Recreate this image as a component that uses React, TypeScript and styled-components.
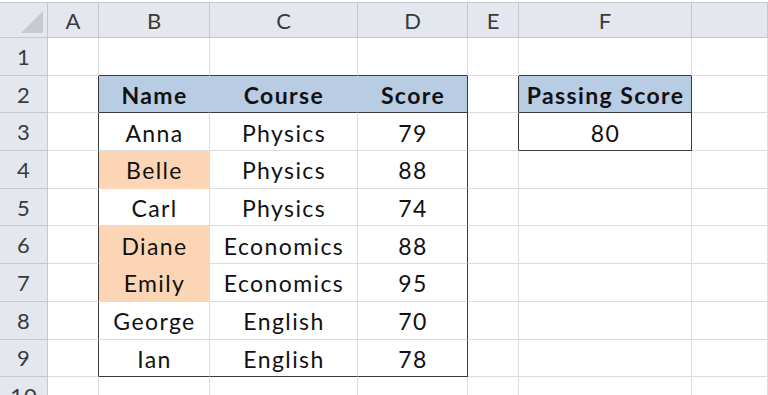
import React from "react";
import styled, { createGlobalStyle } from "styled-components";

const GRID = "#dadcdd";
const DARK = "#3a3a3a";
const HEAD_BG = "#e4e8ee";
const HEAD_LINE = "#c3c8ce";
const BLUE = "#b8cce4";
const PEACH = "#fcd5b4";

const COLS = ["A", "B", "C", "D", "E", "F", ""];
const WIDTHS = [48, 51, 111, 148, 110, 51, 173, 76];
const ROW_H = 37.7;

type Box = { r1: number; r2: number; c1: number; c2: number };

// outlined ranges, 1-based rows, 0-based columns (A = 0)
const BOXES: Box[] = [
  { r1: 2, r2: 9, c1: 1, c2: 3 },
  { r1: 2, r2: 3, c1: 5, c2: 5 }
];

type CellData = { text: string; bold?: boolean; fill?: string };

const DATA: Record<number, Record<number, CellData>> = {
  2: {
    1: { text: "Name", bold: true, fill: BLUE },
    2: { text: "Course", bold: true, fill: BLUE },
    3: { text: "Score", bold: true, fill: BLUE },
    5: { text: "Passing Score", bold: true, fill: BLUE }
  },
  3: { 1: { text: "Anna" }, 2: { text: "Physics" }, 3: { text: "79" }, 5: { text: "80" } },
  4: { 1: { text: "Belle", fill: PEACH }, 2: { text: "Physics" }, 3: { text: "88" } },
  5: { 1: { text: "Carl" }, 2: { text: "Physics" }, 3: { text: "74" } },
  6: { 1: { text: "Diane", fill: PEACH }, 2: { text: "Economics" }, 3: { text: "88" } },
  7: { 1: { text: "Emily", fill: PEACH }, 2: { text: "Economics" }, 3: { text: "95" } },
  8: { 1: { text: "George" }, 2: { text: "English" }, 3: { text: "70" } },
  9: { 1: { text: "Ian" }, 2: { text: "English" }, 3: { text: "78" } }
};

const inRange = (v: number, a: number, b: number) => v >= a && v <= b;

const rightEdge = (r: number, c: number) =>
  BOXES.some((b) => inRange(r, b.r1, b.r2) && (c === b.c2 || c + 1 === b.c1));

const bottomEdge = (r: number, c: number) =>
  BOXES.some(
    (b) =>
      inRange(c, b.c1, b.c2) && (r === b.r2 || r + 1 === b.r1 || r === b.r1)
  );

const GlobalStyle = createGlobalStyle`
  html, body {
    margin: 0;
    padding: 0;
    background: #ffffff;
    overflow: hidden;
  }
`;

const Sheet = styled.div`
  display: grid;
  grid-template-columns: ${WIDTHS.map((w) => `${w}px`).join(" ")};
  grid-auto-rows: ${ROW_H}px;
  grid-template-rows: 35px;
  margin-top: 2px;
  border-top: 1px solid ${HEAD_LINE};
  font-family: Lato, "Liberation Sans", sans-serif;
  width: 768px;
  height: 392px;
  overflow: hidden;
`;

const Corner = styled.div`
  background: ${HEAD_BG};
  border-right: 1px solid ${HEAD_LINE};
  border-bottom: 1px solid ${HEAD_LINE};
  position: relative;
  &::after {
    content: "";
    position: absolute;
    right: 4px;
    bottom: 4px;
    width: 0;
    height: 0;
    border-left: 22px solid transparent;
    border-bottom: 22px solid #c7cbd1;
  }
`;

const Heading = styled.div`
  background: ${HEAD_BG};
  border-right: 1px solid ${HEAD_LINE};
  border-bottom: 1px solid ${HEAD_LINE};
  display: flex;
  align-items: center;
  justify-content: center;
  padding-left: 1px;
  font-size: 22px;
  letter-spacing: 1px;
  color: #3a3a3a;
`;

const Cell = styled.div<{ $fill?: string; $bold?: boolean; $right: boolean; $bottom: boolean }>`
  background: ${(p) => p.$fill || "#ffffff"};
  border-right: 1px solid ${(p) => (p.$right ? DARK : p.$fill || GRID)};
  border-bottom: 1px solid ${(p) => (p.$bottom ? DARK : p.$fill || GRID)};
  display: flex;
  align-items: center;
  justify-content: center;
  padding-top: 2px;
  padding-left: 1px;
  font-size: 23px;
  letter-spacing: 1.4px;
  font-weight: ${(p) => (p.$bold ? 700 : 400)};
  color: #111;
  white-space: nowrap;
`;

export default function App() {
  const rows = Array.from({ length: 10 }, (_, i) => i + 1);
  return (
    <>
      <GlobalStyle />
      <Sheet>
        <Corner />
        {COLS.map((c, i) => (
          <Heading key={`h${i}`}>{c}</Heading>
        ))}
        {rows.map((r) => (
          <React.Fragment key={r}>
            <Heading>{r}</Heading>
            {COLS.map((_, c) => {
              const d = DATA[r]?.[c];
              return (
                <Cell
                  key={c}
                  $fill={d?.fill}
                  $bold={d?.bold}
                  $right={rightEdge(r, c)}
                  $bottom={bottomEdge(r, c)}
                >
                  {d?.text}
                </Cell>
              );
            })}
          </React.Fragment>
        ))}
      </Sheet>
    </>
  );
}
